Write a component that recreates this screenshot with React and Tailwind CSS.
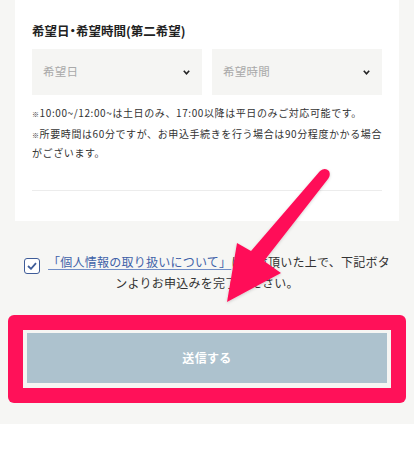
const jp = { fontFamily: '"Noto Sans CJK JP", "Noto Sans", sans-serif' };

function SelectBox({ placeholder }) {
  return (
    <div className="flex h-[46px] flex-1 items-center justify-between bg-[#f5f5f3] pl-[11px] pr-[12px]">
      <span className="text-[11.5px] tracking-[0.02em] text-[#a9a9a9]">{placeholder}</span>
      <svg width="7" height="5" viewBox="0 0 7 5">
        <path d="M0.8 0.8 L3.5 3.8 L6.2 0.8" fill="none" stroke="#222" strokeWidth="1.6" />
      </svg>
    </div>
  );
}

function Arrow() {
  return (
    <svg
      className="pointer-events-none absolute left-0 top-0"
      width="414"
      height="459"
      viewBox="0 0 414 459"
    >
      <defs>
        <filter id="sh" x="-20%" y="-20%" width="140%" height="140%">
          <feDropShadow dx="0" dy="1" stdDeviation="1.5" floodColor="#000" floodOpacity="0.18" />
        </filter>
      </defs>
      <path
        d="M227 302 L237 243 L251 251 L320 171 Q325 167 329 171 Q331 175 328 179 L264 261 L281 273 Z"
        fill="#ff1159"
        filter="url(#sh)"
      />
    </svg>
  );
}

export default function App() {
  return (
    <div className="relative w-[414px] bg-white" style={jp}>
      <div className="bg-[#f6f6f4] pb-[21px]">
        <div className="mx-[15px] bg-white px-[17px] pb-[30px] pt-[22px]">
          <h3 className="text-[12.5px] font-bold leading-[18px] text-[#222]">
            希望日<span className="-mx-[3px]">・</span>希望時間(第二希望)
          </h3>
          <div className="mt-[9px] flex gap-[10px]">
            <SelectBox placeholder="希望日" />
            <SelectBox placeholder="希望時間" />
          </div>
          <p className="mt-[9px] text-[10px] leading-[17px] tracking-[0.06em] text-[#333]">
            <span className="text-[7px]">※</span>10:00~/12:00~は土日のみ、17:00以降は平日のみご対応可能です。
          </p>
          <p className="mt-[2px] text-[10px] leading-[17px] tracking-[0.06em] text-[#333]">
            <span className="text-[7px]">※</span>所要時間は60分ですが、お申込手続きを行う場合は90分程度かかる場合がございます。
          </p>
          <div className="mt-[29px] h-px bg-[#ececec]" />
        </div>

        <p className="mt-[30px] px-[22px] text-center text-[12px] leading-[21px] tracking-[0.02em] text-[#333]">
          <span className="mr-[8px] inline-flex h-[16px] w-[16px] translate-y-[3px] items-center justify-center rounded-[3px] border-[1.5px] border-[#3f5c98] bg-white align-baseline">
            <svg width="10" height="8" viewBox="0 0 10 8">
              <path d="M1 4 L4 6.8 L9 1.2" fill="none" stroke="#3f5c98" strokeWidth="1.8" />
            </svg>
          </span>
          <a className="text-[#3f62a8] underline decoration-[#6f8cc6] underline-offset-2">
            「個人情報の取り扱いについて」
          </a>
          に同意頂いた上で、下記ボタンよりお申込みを完了ください。
        </p>

        <div className="mx-[8px] mt-[22px] rounded-[6px] bg-[#ff1159] p-[15px]">
          <div className="bg-[#f5f5f3] px-[4px] pb-[5px] pt-[3px]">
            <button className="flex h-[50px] w-full items-center justify-center bg-[#adc2ce] text-[12px] font-bold tracking-[0.03em] text-white">
              送信する
            </button>
          </div>
        </div>
      </div>
      <div className="h-[37px] bg-white" />
      <Arrow />
    </div>
  );
}
